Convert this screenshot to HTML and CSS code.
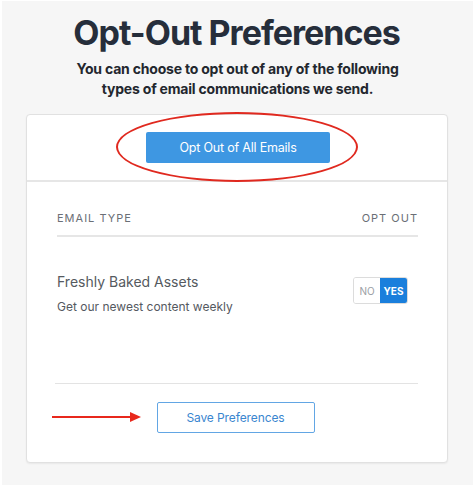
FILE: index.html
```html
<!DOCTYPE html>
<html>
<head>
<meta charset="utf-8">
<link rel="stylesheet" href="styles.css">
</head>
<body>
<div class="page">
  <h1 class="title">Opt-Out Preferences</h1>
  <p class="subtitle">You can choose to opt out of any of the following<br>types of email communications we send.</p>
  <div class="card">
    <div class="card-top">
      <button class="btn-primary">Opt Out of All Emails</button>
      <div class="ellipse"></div>
    </div>
    <div class="card-body">
      <div class="table-head">
        <span>EMAIL TYPE</span>
        <span>OPT OUT</span>
      </div>
      <div class="row">
        <div class="row-text">
          <div class="row-title">Freshly Baked Assets</div>
          <div class="row-desc">Get our newest content weekly</div>
        </div>
        <div class="toggle">
          <span class="toggle-no">NO</span>
          <span class="toggle-yes">YES</span>
        </div>
      </div>
      <div class="footer">
        <div class="arrow">
          <svg width="90" height="12" viewBox="0 0 90 12"><line x1="0" y1="6" x2="80" y2="6" stroke="#e8281c" stroke-width="2"/><polygon points="78,1 89,6 78,11" fill="#e8281c"/></svg>
        </div>
        <button class="btn-outline">Save Preferences</button>
      </div>
    </div>
  </div>
</div>
</body>
</html>
```
FILE: styles.css
```css
html, body {
  margin: 0;
  padding: 0;
  background: #ffffff;
}
body {
  font-family: "Inter", "Liberation Sans", sans-serif;
}
.page {
  width: 471px;
  height: 484px;
  margin: 1px 0 0 2px;
  background: #f6f6f6;
  padding-top: 10px;
  box-sizing: border-box;
  overflow: hidden;
}
.title {
  margin: 0;
  text-align: center;
  font-size: 34px;
  line-height: 44px;
  font-weight: 700;
  color: #262e3b;
  letter-spacing: -1px;
  padding-right: 2px;
}
.subtitle {
  margin: 4px 0 0 0;
  text-align: center;
  font-size: 14px;
  line-height: 20px;
  font-weight: 700;
  color: #23272e;
  letter-spacing: -0.2px;
}
.card {
  margin: 15px 0 0 24px;
  width: 422px;
  height: 349px;
  box-sizing: border-box;
  background: #ffffff;
  border: 1px solid #e1e1e1;
  border-radius: 4px;
  box-shadow: 0 1px 2px rgba(0,0,0,0.06);
}
.card-top {
  position: relative;
  height: 67px;
  display: flex;
  justify-content: center;
  align-items: flex-start;
  padding-top: 17px;
  box-sizing: border-box;
  border-bottom: 2px solid #e6e6e6;
}
.btn-primary {
  width: 184px;
  height: 31px;
  margin-left: 2px;
  border: none;
  border-radius: 2px;
  background: #3e97e2;
  color: #ffffff;
  font-family: "Inter", "Liberation Sans", sans-serif;
  font-size: 12.5px;
  letter-spacing: -0.2px;
  padding: 0;
}
.ellipse {
  position: absolute;
  left: 89px;
  top: -3px;
  width: 242px;
  height: 70px;
  border: 2px solid #e0291f;
  border-radius: 50%;
  box-sizing: border-box;
}
.card-body {
  padding: 0 29px 0 30px;
}
.table-head {
  display: flex;
  justify-content: space-between;
  padding-top: 29px;
  height: 24px;
  border-bottom: 2px solid #e6e6e6;
  font-size: 11px;
  line-height: 14px;
  letter-spacing: 1px;
  color: #6b6f76;
}
.row {
  display: flex;
  justify-content: space-between;
  align-items: flex-start;
  padding-top: 35px;
  height: 146px;
  box-sizing: border-box;
}
.row-title {
  font-size: 14px;
  line-height: 20px;
  color: #555a60;
}
.row-desc {
  margin-top: 6px;
  font-size: 12px;
  line-height: 18px;
  color: #55595f;
}
.toggle {
  display: flex;
  margin-top: 5px;
  margin-right: 10px;
  height: 27px;
  border: 1px solid #dcdcdc;
  border-radius: 3px;
  overflow: hidden;
  box-sizing: border-box;
  font-size: 10px;
}
.toggle-no {
  width: 26px;
  display: flex;
  align-items: center;
  justify-content: center;
  color: #9a9ea4;
  background: #fff;
}
.toggle-yes {
  width: 27px;
  display: flex;
  align-items: center;
  justify-content: center;
  color: #ffffff;
  background: #1a7fdc;
  font-weight: 700;
}
.footer {
  position: relative;
  margin-left: -2px;
  border-top: 1px solid #e3e3e3;
  padding-top: 18px;
  display: flex;
  justify-content: center;
}
.btn-outline {
  width: 158px;
  height: 31px;
  margin-left: -2px;
  border: 1px solid #62a6e4;
  border-radius: 2px;
  background: #ffffff;
  color: #3a86cf;
  font-family: "Inter", "Liberation Sans", sans-serif;
  font-size: 12px;
  letter-spacing: -0.1px;
  padding: 0;
}
.arrow {
  position: absolute;
  left: -3px;
  top: 27px;
  line-height: 0;
}
```
